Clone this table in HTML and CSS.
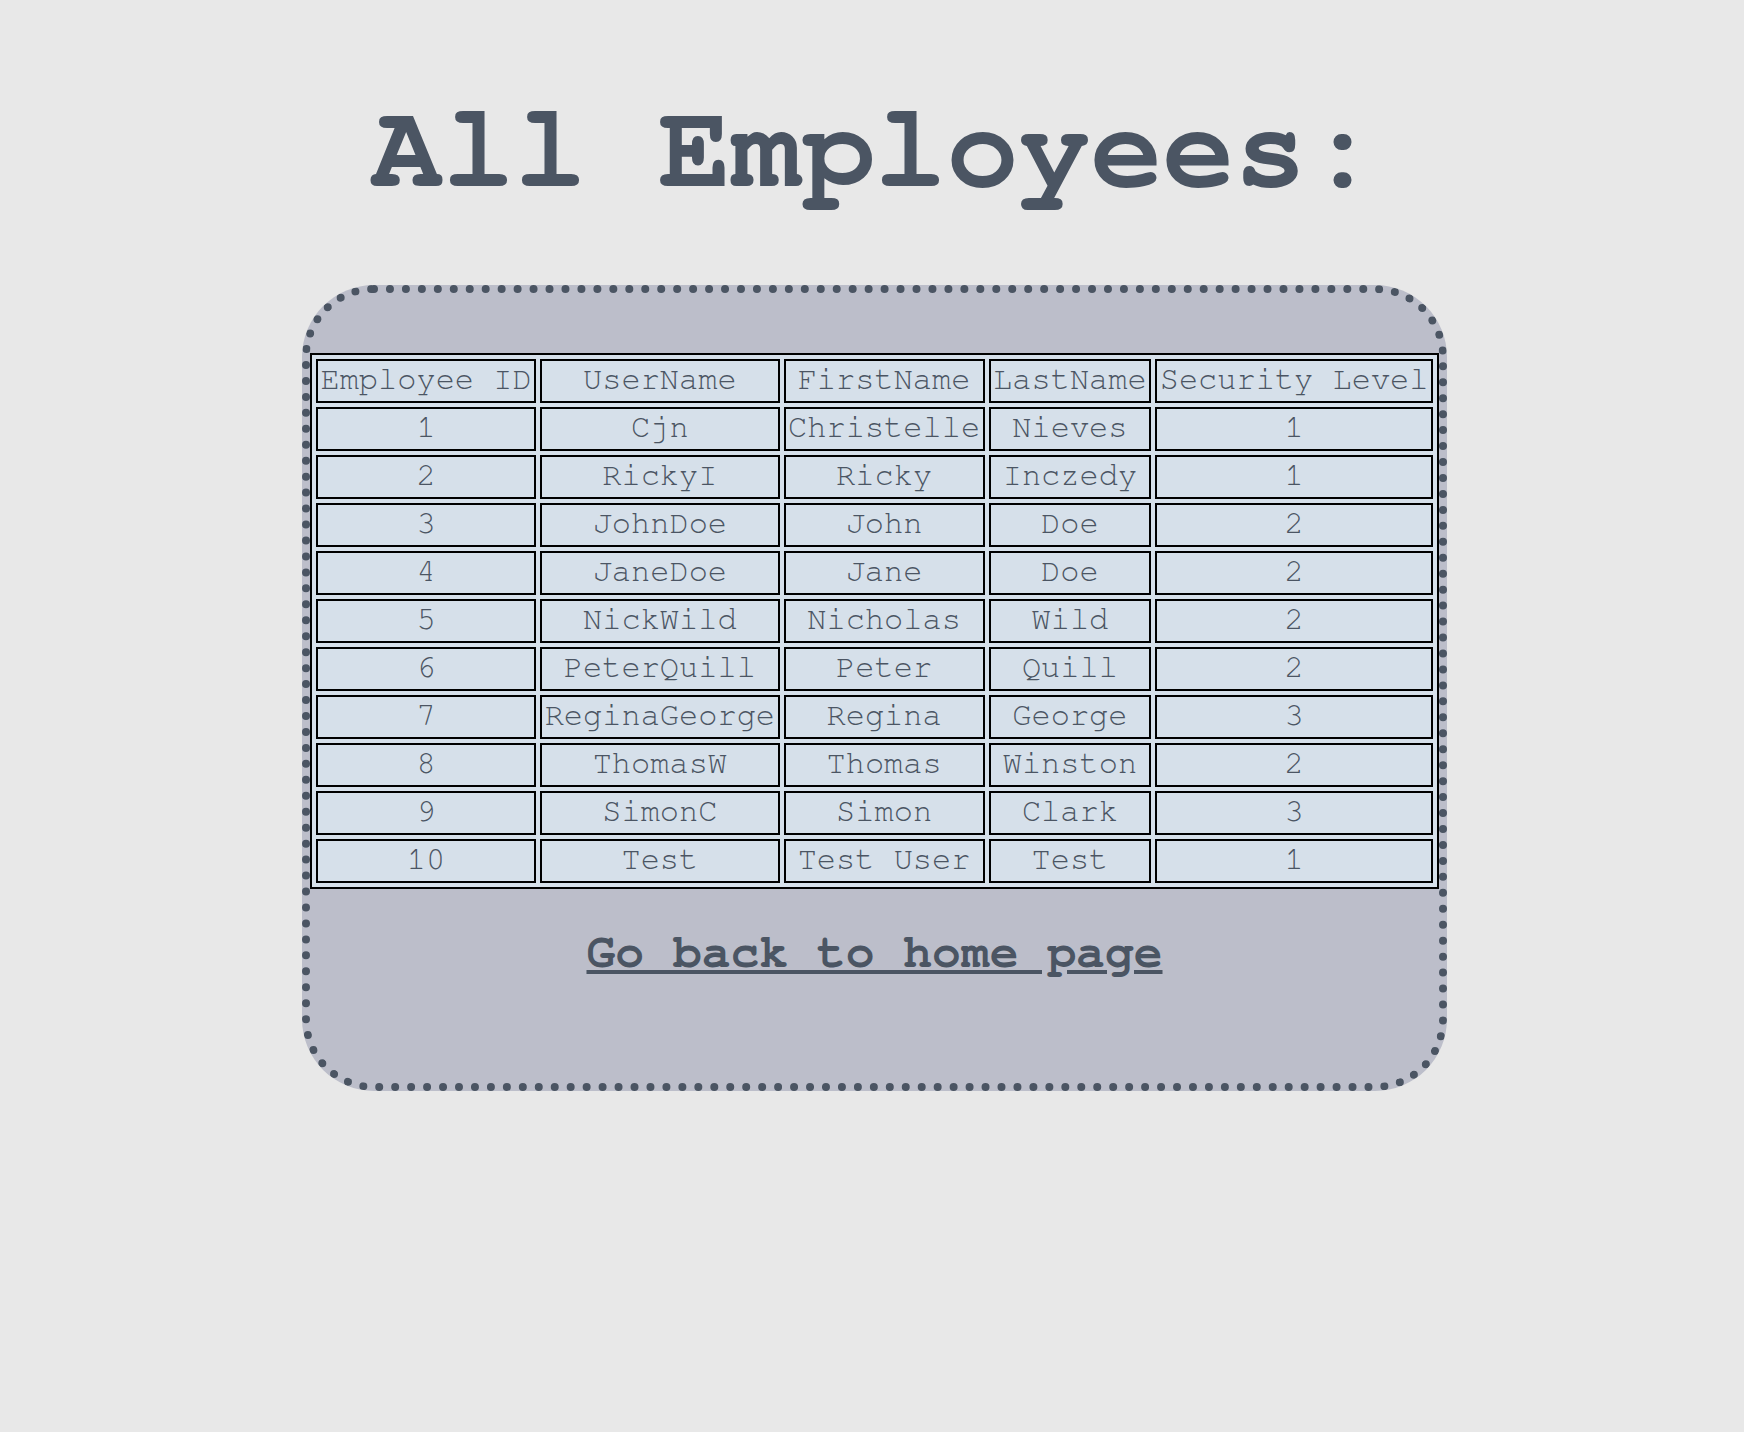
FILE: index.html
```html
<!DOCTYPE html>
<html lang="en">
<head>
<meta charset="utf-8">
<title>All Employees</title>
<link rel="stylesheet" href="styles.css">
</head>
<body>
<main class="page">
  <h1 class="title">All Employees:</h1>
  <section class="card">
    <table class="employees">
      <thead>
        <tr><th>Employee ID</th><th>UserName</th><th>FirstName</th><th>LastName</th><th>Security Level</th></tr>
      </thead>
      <tbody>
        <tr><td>1</td><td>Cjn</td><td>Christelle</td><td>Nieves</td><td>1</td></tr>
        <tr><td>2</td><td>RickyI</td><td>Ricky</td><td>Inczedy</td><td>1</td></tr>
        <tr><td>3</td><td>JohnDoe</td><td>John</td><td>Doe</td><td>2</td></tr>
        <tr><td>4</td><td>JaneDoe</td><td>Jane</td><td>Doe</td><td>2</td></tr>
        <tr><td>5</td><td>NickWild</td><td>Nicholas</td><td>Wild</td><td>2</td></tr>
        <tr><td>6</td><td>PeterQuill</td><td>Peter</td><td>Quill</td><td>2</td></tr>
        <tr><td>7</td><td>ReginaGeorge</td><td>Regina</td><td>George</td><td>3</td></tr>
        <tr><td>8</td><td>ThomasW</td><td>Thomas</td><td>Winston</td><td>2</td></tr>
        <tr><td>9</td><td>SimonC</td><td>Simon</td><td>Clark</td><td>3</td></tr>
        <tr><td>10</td><td>Test</td><td>Test User</td><td>Test</td><td>1</td></tr>
      </tbody>
    </table>
    <p class="back"><a class="back-link" href="#">Go back to home page</a></p>
  </section>
</main>
</body>
</html>
```

FILE: styles.css
```css
html, body {
  margin: 0;
  padding: 0;
}

body {
  background: #e8e8e8;
  color: #4b5563;
  font-family: "Nimbus Mono PS", "Nimbus Mono L", "FreeMono", "Courier", "Courier New", "Liberation Mono", monospace;
}

.page {
  display: flex;
  flex-direction: column;
  align-items: center;
  padding-left: 5px;
}

.title {
  margin: 82px 0 0;
  font-size: 120px;
  font-weight: bold;
  line-height: 136px;
  color: #4b5563;
  text-align: center;
}

.card {
  margin-top: 67px;
  background: #bcbeca;
  border: 8px dotted #4b5563;
  border-radius: 72px;
  padding: 60px 0 0;
  display: flex;
  flex-direction: column;
  align-items: center;
}

.employees {
  border: 2px solid #000;
  border-spacing: 4px;
  background: #d6e0ea;
  font-size: 32px;
  line-height: 36px;
}

.employees th,
.employees td {
  border: 2px solid #000;
  padding: 0 2.5px 4px;
  font-weight: normal;
  text-align: center;
  white-space: nowrap;
  color: #4b5563;
}

.back {
  margin: 37px 0 103px;
  font-size: 48px;
  line-height: 54px;
  font-weight: bold;
  text-align: center;
}

.back-link {
  color: #4b5563;
  text-decoration: underline;
}
```
